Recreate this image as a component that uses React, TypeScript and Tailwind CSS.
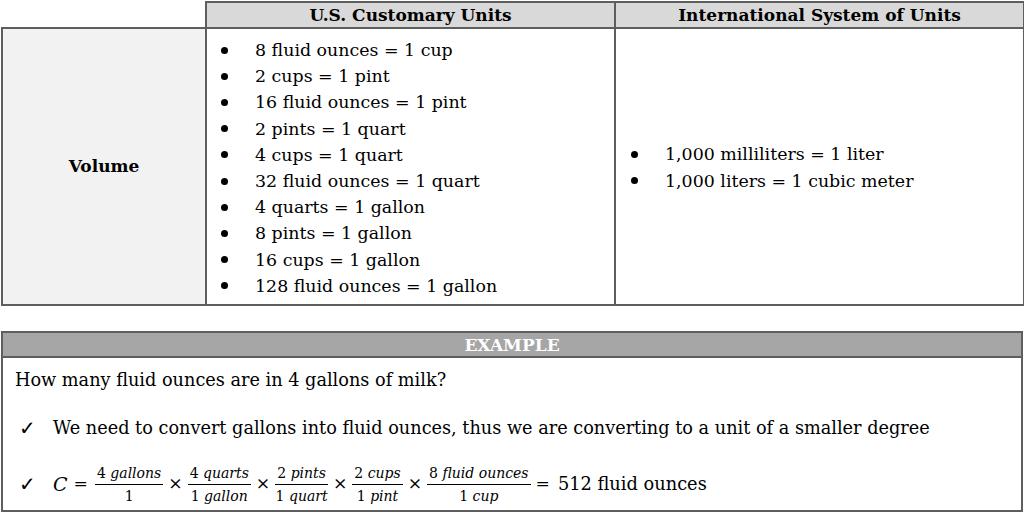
import React from 'react';

const usUnits = [
  '8 fluid ounces = 1 cup',
  '2 cups = 1 pint',
  '16 fluid ounces = 1 pint',
  '2 pints = 1 quart',
  '4 cups = 1 quart',
  '32 fluid ounces = 1 quart',
  '4 quarts = 1 gallon',
  '8 pints = 1 gallon',
  '16 cups = 1 gallon',
  '128 fluid ounces = 1 gallon',
];

const siUnits = ['1,000 milliliters = 1 liter', '1,000 liters = 1 cubic meter'];

function BulletList({ items, offset }: { items: string[]; offset: string }) {
  return (
    <ul className={offset}>
      {items.map((item, i) => (
        <li key={i} className="flex items-center h-[26.2px]">
          <span className="w-[35px] flex items-center">
            <span className="block w-[7px] h-[7px] ml-[1px] rounded-full bg-black"></span>
          </span>
          <span>{item}</span>
        </li>
      ))}
    </ul>
  );
}

function Frac({ num, numUnit, den, denUnit }: { num: string; numUnit: string; den: string; denUnit?: string }) {
  return (
    <span className="inline-flex flex-col items-center mx-[5px] text-[14px] leading-[22px]">
      <span className="px-[2px] border-b-[1.5px] border-black">
        {num} <i>{numUnit}</i>
      </span>
      <span>
        {den}
        {denUnit && (
          <>
            {' '}
            <i>{denUnit}</i>
          </>
        )}
      </span>
    </span>
  );
}

function Check() {
  return (
    <span className="w-[38px] pl-[4px] text-[20px] leading-none" style={{ fontFamily: '"DejaVu Sans", sans-serif' }}>
      ✓
    </span>
  );
}

export default function App() {
  return (
    <div
      className="w-[1024px] h-[514px] bg-white text-black pt-[1px] pl-[1px]"
      style={{ fontFamily: '"DejaVu Serif", serif' }}
    >
      <table className="border-collapse w-[1022px] text-[17.4px] table-fixed">
        <colgroup>
          <col className="w-[204px]" />
          <col className="w-[409px]" />
          <col className="w-[409px]" />
        </colgroup>
        <thead>
          <tr className="h-[26px]">
            <th className="p-0"></th>
            <th className="p-0 border-2 border-[#5e5e5e] bg-[#d9d9d9] font-bold text-[17px] leading-[22px]">U.S. Customary Units</th>
            <th className="p-0 border-2 border-[#5e5e5e] bg-[#d9d9d9] font-bold text-[17px] leading-[22px]">International System of Units</th>
          </tr>
        </thead>
        <tbody>
          <tr className="h-[277px]">
            <td className="p-0 border-2 border-[#5e5e5e] bg-[#f2f2f2] text-center font-bold text-[17px] align-middle">Volume</td>
            <td className="p-0 pt-[8px] border-2 border-[#5e5e5e] align-top">
              <BulletList items={usUnits} offset="pl-[13px]" />
            </td>
            <td className="p-0 border-2 border-[#5e5e5e] align-middle">
              <BulletList items={siUnits} offset="pl-[14px] pt-[2px]" />
            </td>
          </tr>
        </tbody>
      </table>

      <div className="mt-[25px] w-[1022px] border-2 border-[#5e5e5e] text-[17.7px]">
        <div className="h-[25px] bg-[#a6a6a6] border-b-2 border-[#5e5e5e] text-white font-bold text-center text-[17px] leading-[24px]">
          EXAMPLE
        </div>
        <div className="pl-[12px] pt-[8px] pb-[2px]">
          <p className="h-[28px] leading-[28px]">How many fluid ounces are in 4 gallons of milk?</p>
          <div className="flex items-center h-[28px] mt-[20px]">
            <Check />
            <span>We need to convert gallons into fluid ounces, thus we are converting to a unit of a smaller degree</span>
          </div>
          <div className="flex items-center h-[48px] mt-[18px] text-[17.2px]">
            <Check />
            <i className="mr-[6px] text-[19px]">C</i>
            <span className="mr-[2px]">=</span>
            <Frac num="4" numUnit="gallons" den="1" />
            <span>×</span>
            <Frac num="4" numUnit="quarts" den="1" denUnit="gallon" />
            <span>×</span>
            <Frac num="2" numUnit="pints" den="1" denUnit="quart" />
            <span>×</span>
            <Frac num="2" numUnit="cups" den="1" denUnit="pint" />
            <span>×</span>
            <Frac num="8" numUnit="fluid ounces" den="1" denUnit="cup" />
            <span>=</span>
            <span className="ml-[8px] text-[17.8px]">512 fluid ounces</span>
          </div>
        </div>
      </div>
    </div>
  );
}
